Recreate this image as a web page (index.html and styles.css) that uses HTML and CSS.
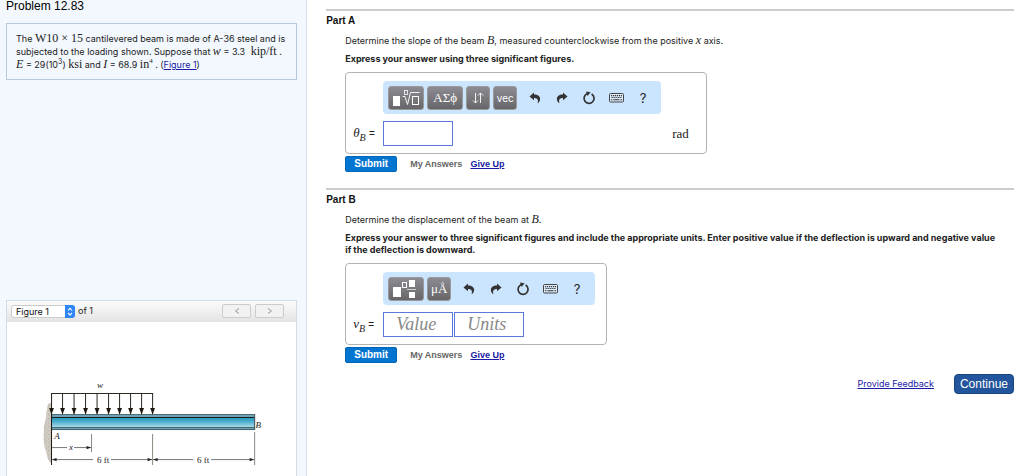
FILE: index.html
```
<!DOCTYPE html>
<html lang="en">

<head>
    <meta charset="UTF-8">
    <meta name="viewport" content="width=device-width, initial-scale=1.0">
    <title>Problem 12.83</title>
    <link rel="stylesheet" href="styles.css">
</head>

<body>

    <!-- Shared toolbar icons -->
    <svg class="icon-defs" aria-hidden="true">
        <symbol id="icon-undo" viewBox="0 0 12 12">
            <path d="M5 0.5 L0.5 4.4 L5 8.3 V5.9 C8.3 5.7 9.6 7.6 8.6 11.3 C13 8 11.6 2.4 5 2.4 Z" fill="#333" />
        </symbol>
        <symbol id="icon-redo" viewBox="0 0 12 12">
            <path d="M7 0.5 L11.5 4.4 L7 8.3 V5.9 C3.7 5.7 2.4 7.6 3.4 11.3 C-1 8 0.4 2.4 7 2.4 Z" fill="#333" />
        </symbol>
        <symbol id="icon-reset" viewBox="0 0 14 14">
            <path d="M9.6 3.1 A5 5 0 1 1 5.1 2.8" fill="none" stroke="#333" stroke-width="1.7" />
            <path d="M4 0.4 L8.6 1.3 L5.6 5 Z" fill="#333" />
        </symbol>
        <symbol id="icon-keyboard" viewBox="0 0 15 10">
            <rect x="0.5" y="0.5" width="14" height="8.5" rx="1" fill="#dcecfa" stroke="#444" />
            <path d="M2 2.6 H13 M2.6 4.5 H13" stroke="#333" stroke-width="1.1" stroke-dasharray="1.2 0.8" />
            <path d="M2 6.8 H3.4 M4.4 6.8 H10.4 M11.4 6.8 H13" stroke="#333" stroke-width="1.1" />
        </symbol>
    </svg>

    <div class="container">
        <!-- Problem statement and figure -->
        <aside class="sidebar">
            <h1>Problem 12.83</h1>
            <p class="statement">
                The <span class="math">W10 × 15</span> cantilevered beam is made of A-36 steel and is<br>
                subjected to the loading shown. Suppose that <i class="math">w</i> = 3.3 <span class="math">&nbsp;kip/ft</span> .<br>
                <i class="math">E</i> = 29(10<sup>3</sup>) <span class="math">ksi</span> and <i class="math">I</i> = 68.9 <span class="math">in<sup>4</sup></span> . (<a href="#figure">Figure 1</a>)
            </p>

            <section class="figure" id="figure">
                <div class="figure-header">
                    <span class="select-wrap">
                        <select id="figureSelect">
                            <option>Figure 1</option>
                        </select>
                        <svg class="select-arrows" viewBox="0 0 10 12" aria-hidden="true">
                            <path d="M3 5 L5 2.8 L7 5 M3 7.4 L5 9.6 L7 7.4" fill="none" stroke="#fff" stroke-width="1.1" />
                        </svg>
                    </span>
                    <label for="figureSelect">of 1</label>
                    <div class="figure-nav">
                        <button type="button" aria-label="Previous figure">
                            <svg viewBox="0 0 6 8"><path d="M5 1.5 L1.5 4 L5 6.5" /></svg>
                        </button>
                        <button type="button" aria-label="Next figure">
                            <svg viewBox="0 0 6 8"><path d="M1 1.5 L4.5 4 L1 6.5" /></svg>
                        </button>
                    </div>
                </div>
                <svg class="beam" viewBox="0 0 289 154" role="img" aria-label="Cantilevered beam">
                    <defs>
                        <linearGradient id="web" x1="0" y1="0" x2="0" y2="1">
                            <stop offset="0" stop-color="#2b9abd" />
                            <stop offset="0.35" stop-color="#48abca" />
                            <stop offset="1" stop-color="#a9dbea" />
                        </linearGradient>
                        <pattern id="stone" width="4" height="4" patternUnits="userSpaceOnUse">
                            <rect width="4" height="4" fill="#d0ccc3" />
                            <rect x="1" width="1" height="1" fill="#aaa59b" />
                            <rect x="3" y="2" width="1" height="1" fill="#b5b0a6" />
                        </pattern>
                        <marker id="load" markerWidth="6" markerHeight="7" refX="3" refY="6" markerUnits="userSpaceOnUse">
                            <path d="M0.6 0 H5.4 L3 6.5 Z" fill="#1d1710" />
                        </marker>
                        <marker id="dim" markerWidth="6" markerHeight="4" refX="5" refY="2" orient="auto-start-reverse" markerUnits="userSpaceOnUse">
                            <path d="M0.5 0.4 L5 2 L0.5 3.6 Z" fill="#222" />
                        </marker>
                    </defs>
                    <path d="M44 81 C39 80 41 87 39 91 C40 97 36 102 37 109 C36 116 37 125 39 129 C40 135 41 139 44 141 Z" fill="url(#stone)" />
                    <rect x="44" y="92" width="203" height="16" fill="#6fa3b3" />
                    <rect x="44" y="96" width="203" height="9" fill="url(#web)" />
                    <path d="M44 92.5 H247" stroke="#4f6b73" />
                    <path d="M44 95.5 H247" stroke="#16211f" />
                    <path d="M44 105.5 H247 M44 107.5 H247" stroke="#456770" />
                    <path d="M247.5 92 V108" stroke="#36474c" />
                    <path d="M44.5 71 V143" stroke="#1d1710" />
                    <path d="M44 71.5 H146" stroke="#2d2820" />
                    <!-- Distributed load -->
                    <g stroke="#2d2820">
                        <path d="M44.5 71 V92" marker-end="url(#load)" />
                        <path d="M55.5 71 V92" marker-end="url(#load)" />
                        <path d="M67 71 V92" marker-end="url(#load)" />
                        <path d="M78.5 71 V92" marker-end="url(#load)" />
                        <path d="M90 71 V92" marker-end="url(#load)" />
                        <path d="M101.5 71 V92" marker-end="url(#load)" />
                        <path d="M112.5 71 V92" marker-end="url(#load)" />
                        <path d="M123.5 71 V92" marker-end="url(#load)" />
                        <path d="M134.5 71 V92" marker-end="url(#load)" />
                        <path d="M145.5 71 V92" marker-end="url(#load)" />
                    </g>
                    <!-- Dimension lines -->
                    <path d="M84.5 112 V130 M145.5 112 V143 M247.5 110 V143" stroke="#8b8780" />
                    <g stroke="#555" stroke-width="0.8">
                        <path d="M45 125.5 H60" />
                        <path d="M67 125.5 H84" marker-end="url(#dim)" />
                        <path d="M86 137.5 H45" marker-end="url(#dim)" />
                        <path d="M104 137.5 H145" marker-end="url(#dim)" />
                        <path d="M186 137.5 H146" marker-end="url(#dim)" />
                        <path d="M204 137.5 H247" marker-end="url(#dim)" />
                    </g>
                    <g class="beam-text">
                        <text x="93" y="66" font-style="italic">w</text>
                        <text x="50" y="117" font-style="italic">A</text>
                        <text x="251" y="106" font-style="italic">B</text>
                        <text x="64" y="128" font-style="italic">x</text>
                        <text x="96" y="141">6 ft</text>
                        <text x="196" y="141">6 ft</text>
                    </g>
                </svg>
            </section>
        </aside>

        <!-- Answer parts -->
        <main class="content">
            <section class="part">
                <h2>Part A</h2>
                <div class="part-body">
                    <p>Determine the slope of the beam <i class="math">B</i>, measured counterclockwise from the positive <i class="math">x</i> axis.</p>
                    <p class="instruction">Express your answer using three significant figures.</p>
                    <form>
                        <div class="answer-box has-unit">
                            <div class="toolbar">
                                <button type="button" class="tool wide" aria-label="Templates">
                                    <svg width="30" height="18" viewBox="0 0 30 18" fill="none" stroke="#fff">
                                        <rect x="2" y="7" width="7" height="10" fill="#fff" stroke="none" />
                                        <rect x="13.5" y="1.5" width="3" height="4" stroke-width="0.8" />
                                        <path d="M11.5 7.5 H14 L16.5 15.5 L19.5 3.5 H28.5" stroke-width="0.9" />
                                        <rect x="21.5" y="7.5" width="6" height="8" />
                                    </svg>
                                </button>
                                <button type="button" class="tool wide symbols">ΑΣϕ</button>
                                <button type="button" class="tool" aria-label="Arrows">
                                    <svg width="12" height="14" viewBox="0 0 12 14" fill="none" stroke="#fff">
                                        <path d="M3.5 2 V12 M1 9.5 L3.5 12 L6 9.5 M8.5 12 V2 M6 4.5 L8.5 2 L11 4.5" stroke-width="0.9" />
                                    </svg>
                                </button>
                                <button type="button" class="tool vec">vec</button>
                                <div class="actions">
                                    <button type="button" aria-label="Undo"><svg width="12" height="12"><use href="#icon-undo" /></svg></button>
                                    <button type="button" aria-label="Redo"><svg width="12" height="12"><use href="#icon-redo" /></svg></button>
                                    <button type="button" aria-label="Reset"><svg width="14" height="14"><use href="#icon-reset" /></svg></button>
                                    <button type="button" aria-label="Keyboard"><svg width="15" height="10"><use href="#icon-keyboard" /></svg></button>
                                    <button type="button">?</button>
                                </div>
                            </div>
                            <label for="slope"><i>θ</i><sub>B</sub> <span>=</span></label>
                            <div class="fields">
                                <input type="text" id="slope">
                            </div>
                            <span class="math unit">rad</span>
                        </div>
                        <div class="submit-row">
                            <button type="submit" class="submit">Submit</button>
                            <span>My Answers</span>
                            <a href="#">Give Up</a>
                        </div>
                    </form>
                </div>
            </section>

            <section class="part">
                <h2>Part B</h2>
                <div class="part-body">
                    <p>Determine the displacement of the beam at <i class="math">B</i>.</p>
                    <p class="instruction">Express your answer to three significant figures and include the appropriate units. Enter positive value if the deflection is upward and negative value<br>if the deflection is downward.</p>
                    <form>
                        <div class="answer-box">
                            <div class="toolbar">
                                <button type="button" class="tool wide" aria-label="Templates">
                                    <svg width="30" height="20" viewBox="0 0 30 20" fill="#fff">
                                        <rect x="2" y="8" width="8" height="10" />
                                        <rect x="11.5" y="3.5" width="4" height="5" fill="none" stroke="#fff" />
                                        <rect x="18" y="1" width="6" height="7" />
                                        <rect x="16" y="10" width="9" height="1" fill="#ccc" />
                                        <rect x="18" y="13" width="6" height="6" />
                                    </svg>
                                </button>
                                <button type="button" class="tool symbols">μÅ</button>
                                <div class="actions">
                                    <button type="button" aria-label="Undo"><svg width="12" height="12"><use href="#icon-undo" /></svg></button>
                                    <button type="button" aria-label="Redo"><svg width="12" height="12"><use href="#icon-redo" /></svg></button>
                                    <button type="button" aria-label="Reset"><svg width="14" height="14"><use href="#icon-reset" /></svg></button>
                                    <button type="button" aria-label="Keyboard"><svg width="15" height="10"><use href="#icon-keyboard" /></svg></button>
                                    <button type="button">?</button>
                                </div>
                            </div>
                            <label for="value"><i>v</i><sub>B</sub> <span>=</span></label>
                            <div class="fields">
                                <input type="text" id="value" placeholder="Value">
                                <input type="text" placeholder="Units" aria-label="Units">
                            </div>
                        </div>
                        <div class="submit-row">
                            <button type="submit" class="submit">Submit</button>
                            <span>My Answers</span>
                            <a href="#">Give Up</a>
                        </div>
                    </form>
                </div>
            </section>

            <div class="page-footer">
                <a href="#">Provide Feedback</a>
                <button type="button" class="continue">Continue</button>
            </div>
        </main>
    </div>

</body>

</html>
```
FILE: styles.css
```
* {
    margin: 0;
    padding: 0;
    box-sizing: border-box;
}

body {
    font-family: Inter, "Liberation Sans", Arial, sans-serif;
    font-size: 9px;
    line-height: 12px;
    color: #222;
    background-color: #fff;
}

a {
    color: #1a1aa6;
}

button,
input,
select {
    font-family: inherit;
    font-size: inherit;
}

.icon-defs {
    display: none;
}

.container {
    display: flex;
    min-height: 100vh;
}

/* Sidebar */
.sidebar {
    width: 30%;
    display: flex;
    flex-direction: column;
    flex-shrink: 0;
    padding: 0 9px 0 6px;
    background-color: #f3f8ff;
    border-right: 1px solid #d5e0ec;
}

.sidebar h1 {
    font-family: "Liberation Sans", Arial, sans-serif;
    font-size: 12px;
    line-height: 12px;
    font-weight: normal;
    color: #000;
    margin-bottom: 11px;
}

.statement {
    padding: 8px 9px;
    border: 1px solid #b5cade;
    line-height: 13px;
    white-space: nowrap;
}

.math {
    font-family: "Liberation Serif", "Times New Roman", serif;
    font-size: 12px;
    line-height: 0;
}

.unit {
    font-size: 13px;
}

sup {
    font-size: 7px;
    line-height: 0;
}

.figure {
    margin-top: auto;
    background-color: #fff;
    border: 1px solid #d2dce6;
    border-bottom: none;
}

.figure-header {
    display: flex;
    align-items: center;
    gap: 3px;
    height: 21px;
    padding: 0 12px 0 4px;
    background: linear-gradient(#fcfcfc, #e3e3e3);
}

.select-wrap {
    position: relative;
    display: flex;
}

.select-wrap select {
    appearance: none;
    width: 64px;
    height: 13px;
    padding-left: 4px;
    border: 1px solid #ccc;
    border-radius: 3px;
    background-color: #fff;
    color: #111;
    line-height: 11px;
}

.select-arrows {
    position: absolute;
    right: 0;
    top: 0;
    width: 10px;
    height: 13px;
    border-radius: 0 3px 3px 0;
    background-color: #2f86f6;
    pointer-events: none;
}

.figure-nav {
    display: flex;
    gap: 4px;
    margin-left: auto;
}

.figure-nav button {
    width: 29px;
    height: 14px;
    display: flex;
    align-items: center;
    justify-content: center;
    border: 1px solid #ccc;
    border-radius: 2px;
    background-color: #f2f2f2;
}

.figure-nav svg {
    width: 6px;
    height: 8px;
    fill: none;
    stroke: #999;
}

.beam {
    display: block;
    width: 100%;
}

.beam-text {
    font-family: "Liberation Serif", "Times New Roman", serif;
    font-size: 9px;
    text-anchor: middle;
    fill: #222;
}

/* Answer parts */
.content {
    flex: 1;
    min-width: 0;
    padding: 9px 10px 0 19px;
}

.part {
    border-top: 2px solid #ccc;
    padding-top: 3px;
}

.part + .part {
    margin-top: 16px;
}

.part h2 {
    font-family: "Liberation Sans", Arial, sans-serif;
    font-size: 10px;
    line-height: 14px;
    color: #111;
    margin-bottom: 7px;
}

.part-body {
    padding-left: 19px;
}

.part-body p {
    margin-bottom: 6px;
}

.part-body .instruction {
    font-weight: bold;
    margin-bottom: 7px;
}

.answer-box {
    display: inline-grid;
    grid-template-columns: 26px auto;
    align-items: center;
    gap: 7px 11px;
    padding: 8px 11px 7px 0;
    border: 1px solid #b3b3b3;
    border-radius: 4px;
    vertical-align: top;
}

.has-unit {
    grid-template-columns: 26px auto auto;
    padding-right: 17px;
}

.toolbar {
    grid-column: 2;
    display: flex;
    align-items: center;
    gap: 3px;
    height: 33px;
    padding: 0 6px 0 5px;
    border-radius: 4px;
    background-color: #cce5fe;
}

.tool {
    width: 24px;
    height: 24px;
    display: flex;
    align-items: center;
    justify-content: center;
    border: 1px solid #999;
    border-radius: 3px;
    background: linear-gradient(#8d8b92, #66666a);
    color: #fff;
}

.wide {
    width: 36px;
}

.symbols {
    font-family: "Liberation Serif", "Times New Roman", serif;
    font-size: 13px;
}

.vec {
    font-size: 10px;
}

.actions {
    display: flex;
    gap: 3px;
    margin-left: 3px;
}

.actions button {
    width: 24px;
    height: 24px;
    display: flex;
    align-items: center;
    justify-content: center;
    border: none;
    background: none;
    color: #222;
    font-size: 13px;
}

.answer-box label {
    grid-column: 1;
    padding-left: 7px;
    white-space: nowrap;
    font-family: "Liberation Serif", "Times New Roman", serif;
    font-size: 13px;
}

.answer-box label sub {
    font-size: 10px;
    font-style: italic;
    line-height: 0;
}

.answer-box label span {
    font-family: "Liberation Sans", Arial, sans-serif;
    font-size: 10px;
}

.fields {
    display: flex;
    gap: 1px;
}

.fields input {
    width: 70px;
    height: 25px;
    padding-left: 12px;
    border: 1px solid #5c78dc;
    background-color: #fff;
    font-family: "Liberation Serif", "Times New Roman", serif;
    font-size: 18px;
}

.fields input::placeholder {
    color: #888;
    font-style: italic;
}

.submit-row {
    display: flex;
    align-items: center;
    margin-top: 2px;
    font-family: "Liberation Sans", Arial, sans-serif;
    font-weight: bold;
    color: #666;
}

.submit {
    width: 52px;
    height: 16px;
    margin-right: 13px;
    border: 1px solid #0067b8;
    border-radius: 2px;
    background-color: #0275d0;
    color: #fff;
    font-size: 10px;
    line-height: 14px;
    font-weight: bold;
}

.submit-row a {
    margin-left: 8px;
}

.page-footer {
    display: flex;
    justify-content: flex-end;
    align-items: center;
    gap: 20px;
    margin-top: 11px;
}

.continue {
    height: 20px;
    padding: 0 5px;
    border: 1px solid #17457f;
    border-radius: 4px;
    background-color: #22559b;
    color: #fff;
    font-family: "Liberation Sans", Arial, sans-serif;
    font-size: 12px;
}
```
